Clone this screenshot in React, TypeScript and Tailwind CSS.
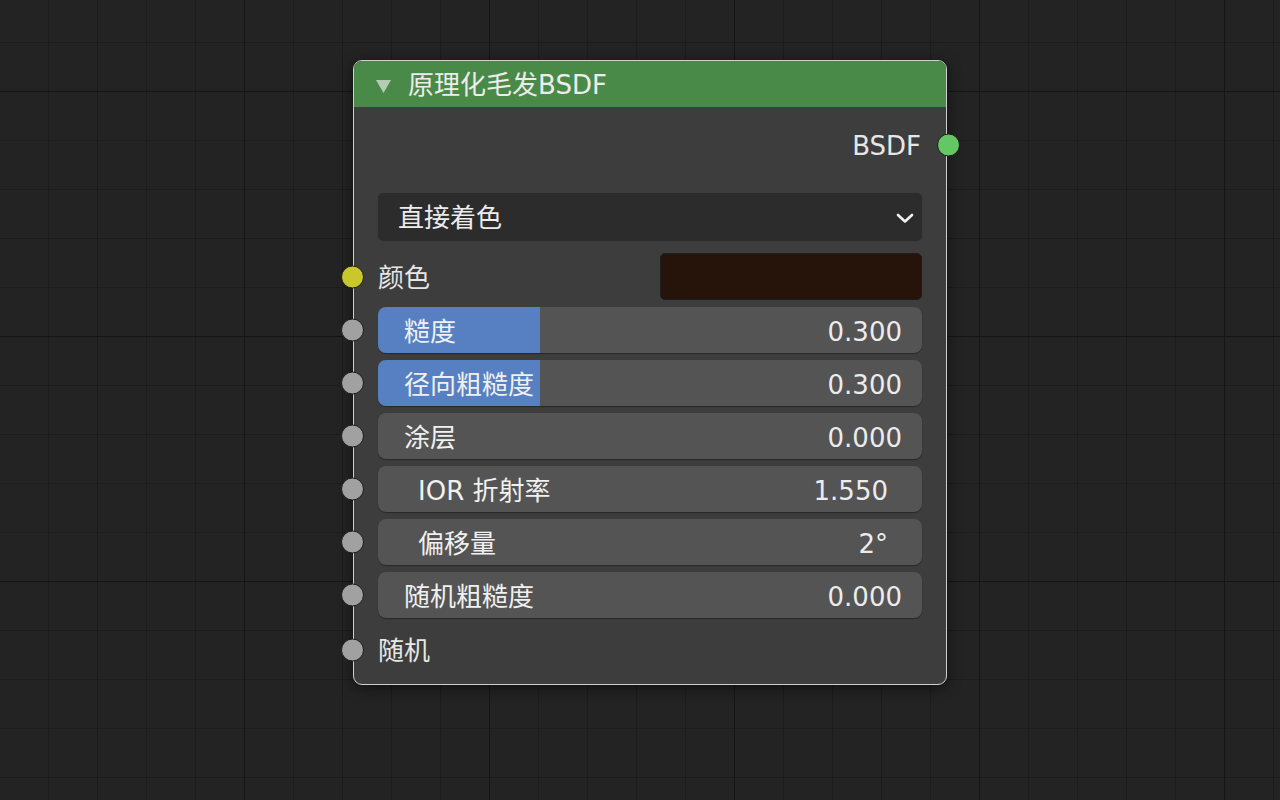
import type { ReactNode } from 'react'

type SocketColor = 'gray' | 'yellow' | 'green'

const socketClass: Record<SocketColor, string> = {
  gray: 'bg-[#a1a1a1]',
  yellow: 'bg-[#c8c82a]',
  green: 'bg-[#63c763]',
}

function Socket({ color, side = 'left' }: { color: SocketColor; side?: 'left' | 'right' }) {
  return (
    <span
      className={`absolute top-1/2 -translate-y-1/2 w-[23px] h-[23px] rounded-full border border-[#1a1a1a] ${socketClass[color]} ${
        side === 'left' ? 'left-[-37px]' : 'right-[-38px]'
      }`}
    />
  )
}

function Slider({
  label,
  value,
  fill = 0,
  indent = false,
}: {
  label: string
  value: string
  fill?: number
  indent?: boolean
}) {
  return (
    <div className="relative h-[46px] mt-[7px]">
      <Socket color="gray" />
      <div className="relative h-full rounded-[8px] bg-[#545454] overflow-hidden shadow-[0_1px_1px_rgba(0,0,0,0.35)]">
        {fill > 0 && (
          <div className="absolute inset-y-0 left-0 bg-[#5680c2]" style={{ width: `${fill * 100}%` }} />
        )}
        <div
          className={`relative h-full flex items-center justify-between pt-[3px] ${
            indent ? 'pl-[40px] pr-[34px]' : 'pl-[26px] pr-[20px]'
          }`}
        >
          <span className="text-[#f0f0f0]">{label}</span>
          <span className="text-[#ececec]">{value}</span>
        </div>
      </div>
    </div>
  )
}

function Row({ children, className = '' }: { children: ReactNode; className?: string }) {
  return <div className={`relative flex items-center ${className}`}>{children}</div>
}

export default function App() {
  return (
    <div
      className="w-full min-h-[800px] overflow-hidden pt-[60px] pl-[353px] bg-[#232323] bg-[image:linear-gradient(to_right,#151515_1px,transparent_1px),linear-gradient(to_bottom,#151515_1px,transparent_1px),linear-gradient(to_right,#1c1c1c_1px,transparent_1px),linear-gradient(to_bottom,#1c1c1c_1px,transparent_1px)] bg-[size:245px_245px,245px_245px,49px_49px,49px_49px] bg-[position:-1px_0,0_91px,-1px_0,0_42px] font-['DejaVu_Sans','Noto_Sans_CJK_SC',sans-serif] text-[26px] leading-none text-[#e6e6e6]"
    >
      <div className="w-[594px] rounded-[9px] border border-[#cfcfcf] bg-[#3d3d3d] shadow-[0_3px_14px_rgba(0,0,0,0.55)]">
        {/* header */}
        <div className="h-[46px] rounded-t-[8px] bg-[#4a8a49] flex items-center pl-[22px]">
          <svg width="15" height="13" viewBox="0 0 15 13" className="mt-[4px]">
            <polygon points="0,0 15,0 7.5,13" fill="#b4ccb4" />
          </svg>
          <span className="ml-[17px] pt-[2px] text-[#ececec]">原理化毛发BSDF</span>
        </div>

        {/* body */}
        <div className="px-[24px] pt-[14px] pb-[10px] flex flex-col">
          <Row className="h-[48px] justify-end pr-[1px] pt-[2px]">
            <span>BSDF</span>
            <Socket color="green" side="right" />
          </Row>

          <div className="mt-[24px] h-[47px] rounded-[5px] bg-[#2c2c2c] flex items-center justify-between pl-[20px] pr-[8px] shadow-[0_1px_1px_rgba(0,0,0,0.3)]">
            <span className="pt-[3px] text-[#ececec]">直接着色</span>
            <svg width="18" height="12" viewBox="0 0 18 12" className="mt-[2px]">
              <polyline
                points="2,3 9,9.5 16,3"
                fill="none"
                stroke="#f2f2f2"
                strokeWidth="2.6"
                strokeLinecap="round"
                strokeLinejoin="round"
              />
            </svg>
          </div>

          <Row className="mt-[13px] h-[47px] justify-between">
            <Socket color="yellow" />
            <span className="pt-[2px]">颜色</span>
            <div className="w-[262px] h-full rounded-[5px] bg-[#261309] border border-[#1e1e1e]" />
          </Row>

          <Slider label="糙度" value="0.300" fill={0.297} />
          <Slider label="径向粗糙度" value="0.300" fill={0.297} />
          <Slider label="涂层" value="0.000" />
          <Slider label="IOR 折射率" value="1.550" indent />
          <Slider label="偏移量" value="2°" indent />
          <Slider label="随机粗糙度" value="0.000" />

          <Row className="mt-[8px] h-[48px] pt-[2px]">
            <Socket color="gray" />
            <span>随机</span>
          </Row>
        </div>
      </div>
    </div>
  )
}
